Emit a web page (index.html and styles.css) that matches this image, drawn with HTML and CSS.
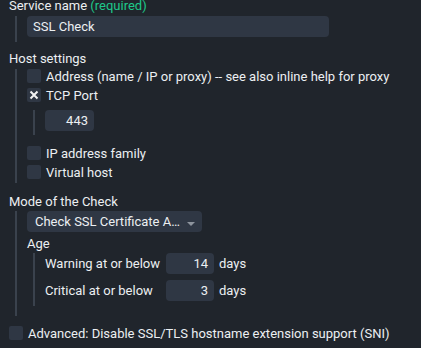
FILE: index.html
```html
<!DOCTYPE html>
<html lang="en">

<head>
    <meta charset="UTF-8">
    <title>SSL Check</title>
    <link rel="stylesheet" href="styles.css">
</head>

<body>
    <div class="title first">Service name <span class="req">(required)</span></div>
    <div class="group svc">
        <div class="input wide">SSL Check</div>
    </div>

    <div class="title host">Host settings</div>
    <div class="group hostGroup">
        <div class="check"><span class="box"></span>Address (name / IP or proxy) -- see also inline help for proxy</div>
        <div class="check"><span class="box">
            <svg width="14" height="14" viewBox="0 0 14 14"><path d="M3.5 3.5 L10.5 10.5 M10.5 3.5 L3.5 10.5" stroke="#f2f2f2" stroke-width="2"/></svg>
        </span>TCP Port</div>
        <div class="group sub portGroup">
            <div class="input num port">443</div>
        </div>
        <div class="check ip"><span class="box"></span>IP address family</div>
        <div class="check"><span class="box"></span>Virtual host</div>
    </div>

    <div class="title mode">Mode of the Check</div>
    <div class="group modeGroup">
        <div class="select">Check SSL Certificate A…<span class="arrow"></span></div>
        <div class="label age">Age</div>
        <div class="group sub ageGroup">
            <div class="ageGrid">
                <div class="rowLabel">Warning at or below</div>
                <div class="input num days">14</div>
                <div>days</div>
                <div class="rowLabel">Critical at or below</div>
                <div class="input num days">3</div>
                <div>days</div>
            </div>
        </div>
    </div>

    <div class="check adv"><span class="box"></span>Advanced: Disable SSL/TLS hostname extension support (SNI)</div>
</body>

</html>
```

FILE: styles.css
```css
* {
    box-sizing: border-box;
    margin: 0;
    padding: 0;
}

body {
    width: 421px;
    height: 348px;
    overflow: hidden;
    background-color: #20252c;
    color: #eceff2;
    font-family: Roboto, "Liberation Sans", sans-serif;
    font-size: 13px;
    line-height: 15px;
    padding-left: 9px;
}

.title {
    height: 15px;
}

.first {
    height: 11px;
    line-height: 11px;
}

.req {
    color: #1ec88a;
}

.group {
    border-left: 2px solid #3a424d;
    margin-left: 6px;
    padding-left: 10px;
}

.svc {
    margin-top: 5px;
    padding-bottom: 5px;
}

.host {
    margin-top: 9px;
}

.hostGroup {
    margin-top: 3px;
    padding-bottom: 4px;
}

.mode {
    margin-top: 11px;
}

.modeGroup {
    margin-top: 2px;
    padding-bottom: 10px;
}

.input {
    background-color: #2f3744;
    border-radius: 4px;
    height: 21px;
    line-height: 21px;
    padding: 0 6px;
}

.wide {
    width: 302px;
}

.num {
    text-align: right;
}

.port {
    width: 49px;
}

.days {
    width: 48px;
}

.check {
    display: flex;
    align-items: center;
    height: 14px;
    margin-bottom: 5px;
}

.hostGroup .check:last-child {
    margin-bottom: 0;
}

.box {
    width: 14px;
    height: 14px;
    background-color: #2f3744;
    border-radius: 2px;
    margin-right: 5px;
    display: flex;
    flex-shrink: 0;
}

.portGroup {
    margin-top: 8px;
    padding-bottom: 4px;
}

.ip {
    margin-top: 11px;
}

.select {
    position: relative;
    width: 175px;
    height: 21px;
    line-height: 21px;
    background-color: #2f3744;
    border-radius: 4px;
    padding-left: 8px;
}

.arrow {
    position: absolute;
    right: 7px;
    top: 11px;
    border-left: 4px solid transparent;
    border-right: 4px solid transparent;
    border-top: 4px solid #8d949d;
}

.label.age {
    margin-top: 4px;
    height: 15px;
}

.ageGroup {
    margin-top: 2px;
    padding-bottom: 5px;
}

.ageGrid {
    display: grid;
    grid-template-columns: 116px 48px auto;
    column-gap: 5px;
    row-gap: 6px;
    align-items: center;
}

.adv {
    margin-top: 10px;
}
```
